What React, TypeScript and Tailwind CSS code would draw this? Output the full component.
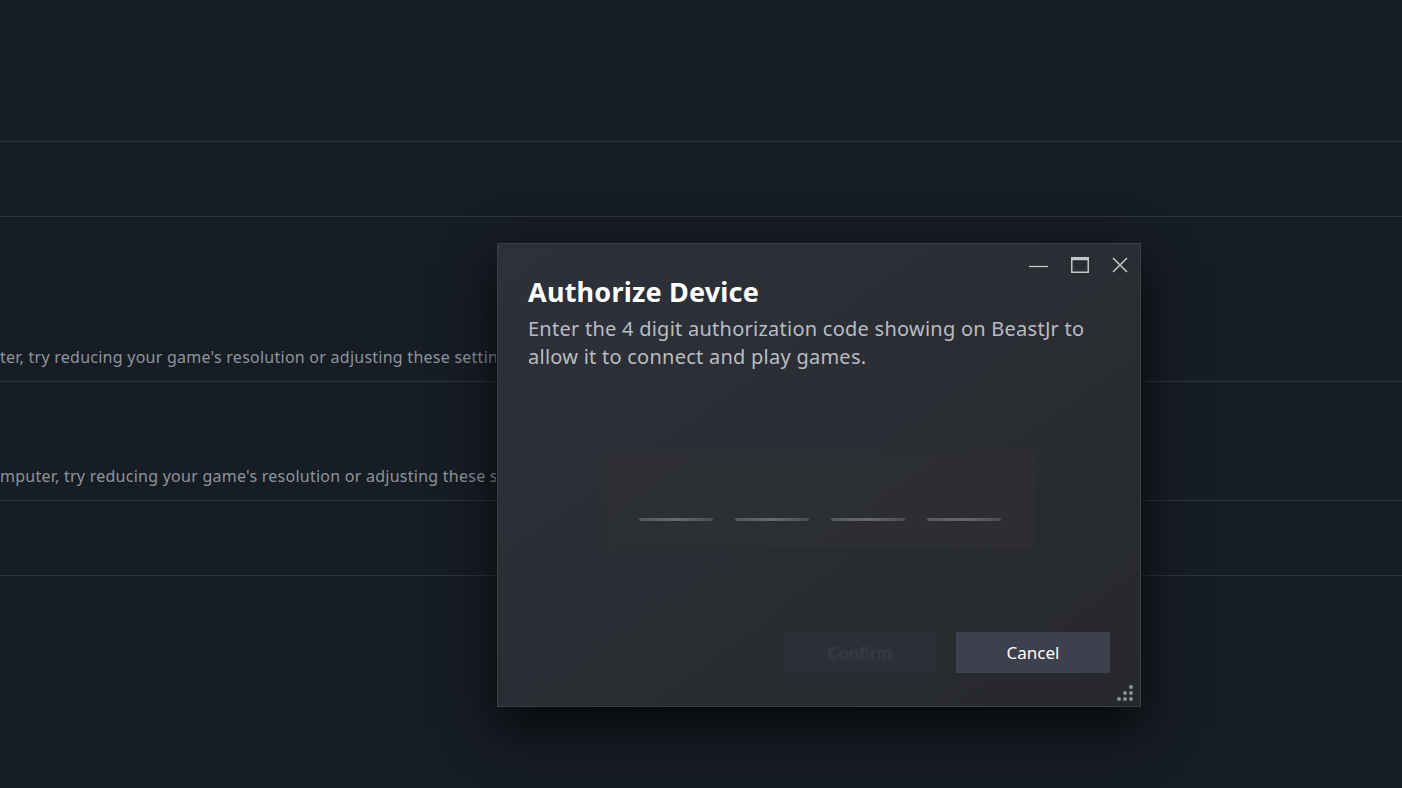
const FONT = { fontFamily: '"Noto Sans", "Open Sans", sans-serif' }

const ROWS = [
  { h: 'h-[142px]', text: '' },
  { h: 'h-[75px]', text: '' },
  { h: 'h-[165px]', text: "ter, try reducing your game's resolution or adjusting these settings to improve performance." },
  { h: 'h-[119px]', text: "mputer, try reducing your game's resolution or adjusting these settings to improve performance." },
  { h: 'h-[75px]', text: '' },
]

export default function App() {
  return (
    <div className="relative w-[1402px] h-[788px] overflow-hidden bg-[#171d25]" style={FONT}>
      {/* Settings list behind the dialog */}
      <div className="flex flex-col">
        {ROWS.map((row, i) => (
          <div
            key={i}
            className={`${row.h} flex flex-col justify-end border-b border-[#2d333c] pb-[13px]`}
          >
            {row.text && (
              <span className="block w-[496px] overflow-hidden whitespace-nowrap text-[16px] leading-[22px] tracking-[0.25px] text-[#8e949c]">
                {row.text}
              </span>
            )}
          </div>
        ))}
      </div>

      <AuthorizeDialog />
    </div>
  )
}

function WindowControls() {
  return (
    <div className="flex justify-end items-start gap-[23px] pt-[13px] pr-[12px] h-[36px] text-[#c3c6ca]">
      <svg width="19" height="16" viewBox="0 0 19 16" className="mt-[1px]">
        <line x1="0" y1="8.5" x2="19" y2="8.5" stroke="currentColor" strokeWidth="1.3" />
      </svg>
      <svg width="18" height="16" viewBox="0 0 18 16">
        <rect x="0.75" y="0.75" width="16.5" height="14.5" fill="none" stroke="currentColor" strokeWidth="1.5" />
        <line x1="0.75" y1="2" x2="17.25" y2="2" stroke="currentColor" strokeWidth="2.5" />
      </svg>
      <svg width="16" height="16" viewBox="0 0 16 16">
        <path d="M1 1 L15 15 M15 1 L1 15" stroke="currentColor" strokeWidth="1.5" />
      </svg>
    </div>
  )
}

function AuthorizeDialog() {
  return (
    <div className="absolute left-[497px] top-[243px] w-[644px] h-[464px] flex flex-col border border-[#3b3e45] bg-gradient-to-br from-[#2d313a] via-[#2a2d33] to-[#26282d] shadow-[0_20px_50px_rgba(0,0,0,0.75)]">
      <WindowControls />

      <div className="px-[30px]">
        <h1 className="text-[27px] font-bold leading-[30px] text-white tracking-[0.2px] -mt-[3px]">
          Authorize Device
        </h1>
        <p className="mt-[8px] w-[570px] text-[20px] leading-[28px] text-[#b9bdc2] tracking-[0.25px]">
          Enter the 4 digit authorization code showing on BeastJr to allow it to connect and play games.
        </p>
      </div>

      {/* Code entry */}
      <div className="flex justify-center mt-[79px]">
        <div className="w-[428px] h-[98px] ml-[2px] bg-[#2e3035]/60 rounded-[2px] flex items-end justify-center gap-[22px] pb-[27px] blur-[0.4px]">
          {[0, 1, 2, 3].map((i) => (
            <div key={i} className="w-[74px] h-[3px] bg-gradient-to-r from-[#55585d] via-[#66696e] to-[#4a4d52] rounded-full" />
          ))}
        </div>
      </div>

      {/* Buttons */}
      <div className="flex justify-end gap-[20px] pr-[30px] mt-auto mb-[33px]">
        <button className="w-[152px] h-[41px] bg-[#2c2f36] text-[17px] text-[#43474e] blur-[1.2px]">
          Confirm
        </button>
        <button className="w-[154px] h-[41px] bg-[#3d414d] text-[17px] text-white">
          Cancel
        </button>
      </div>

      {/* Resize grip */}
      <div className="absolute right-[7px] bottom-[5px] grid grid-cols-3 gap-[2px]">
        {[0, 0, 1, 0, 1, 1, 1, 1, 1].map((v, i) => (
          <div key={i} className={`w-[4px] h-[4px] rounded-full ${v ? 'bg-[#8b8f96]' : 'bg-transparent'}`} />
        ))}
      </div>
    </div>
  )
}
